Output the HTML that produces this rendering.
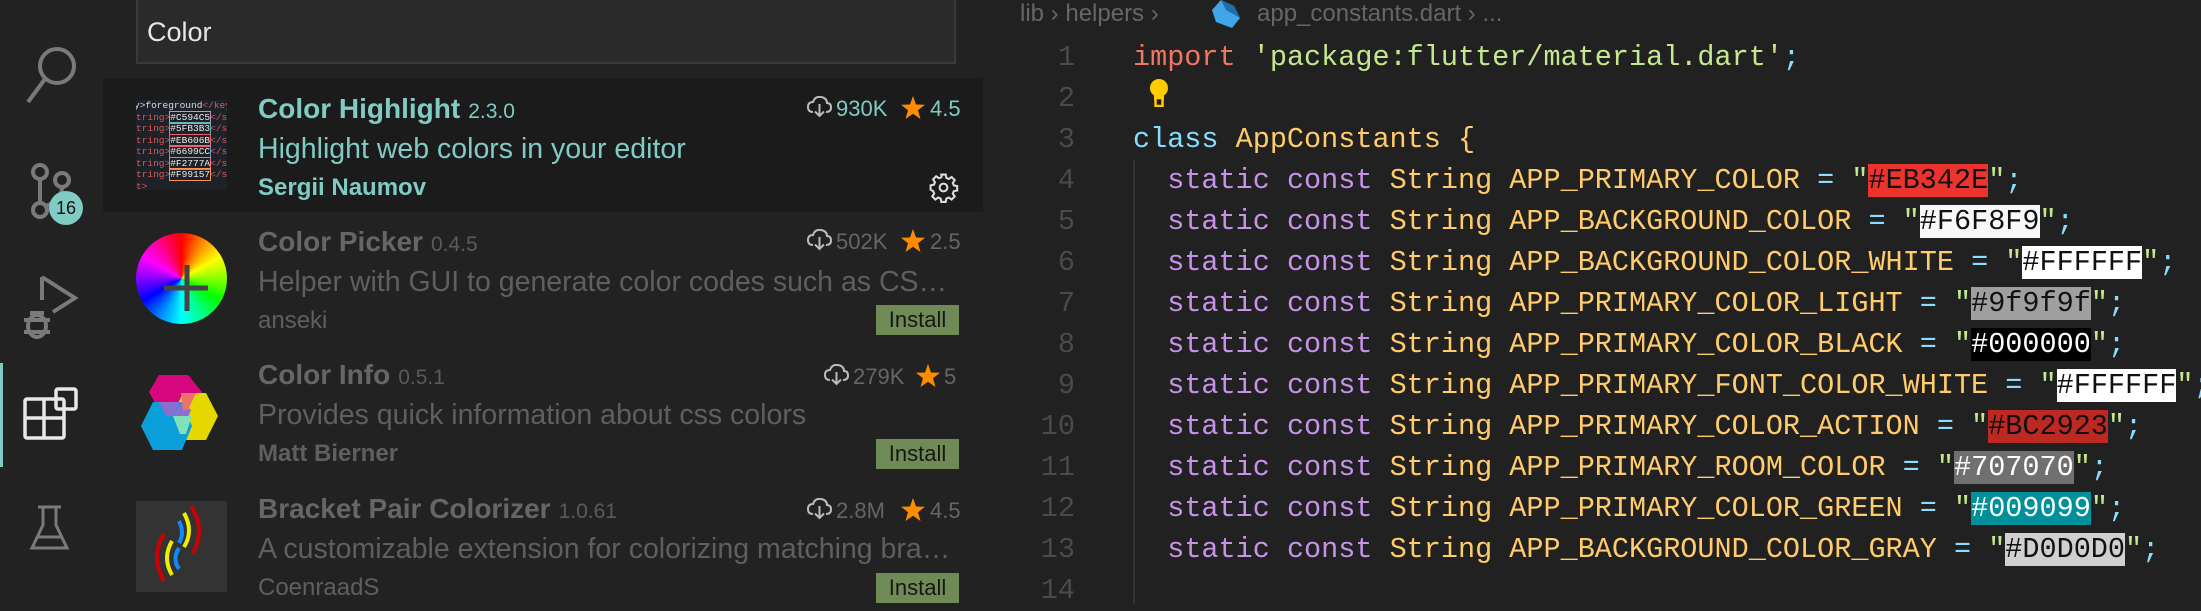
<!DOCTYPE html>
<html><head><meta charset="utf-8"><style>
*{margin:0;padding:0;box-sizing:border-box}
body{width:2201px;height:604px;background:#212121;position:relative;overflow:hidden;font-family:"Liberation Sans",sans-serif}
.a{position:absolute;white-space:nowrap}
.side{position:absolute;left:0;top:0;width:983px;height:604px;background:#222222}
.search{position:absolute;left:136px;top:-2px;width:820px;height:66px;background:#2a2a2a;border:2px solid #3a3a3a}
.sel{position:absolute;left:103px;top:78px;width:880px;height:134px;background:#1b1b1b}
.t{font-weight:bold;font-size:28px;color:#666}
.v{font-size:21px;color:#5a5a5a;font-weight:normal;margin-left:8px}
.d{font-size:28.5px;color:#5f5f5f}
.au{font-size:24px;color:#5f5f5f;font-weight:bold}
.st{font-size:22px;color:#666}
.btn{position:absolute;left:876px;width:83px;height:30px;background:#6f8a54;color:#161616;font-size:22px;text-align:center;line-height:30px}
.code{position:absolute;left:1133px;font-family:"Liberation Mono",monospace;font-size:28.5px;line-height:41px;white-space:pre}
.ln{position:absolute;left:1000px;width:75px;text-align:right;font-family:"Liberation Mono",monospace;font-size:28.5px;color:#4a4a4a;line-height:41px}
.k{color:#c792ea}.y{color:#ffcb6b}.c{color:#89ddff}.g{color:#c3e88d}.r{color:#f07660}
</style></head><body>
<div class="side"></div>
<svg class="a" style="left:0;top:0" width="103" height="604" fill="none" stroke="#7a7a7a" stroke-width="4">
<circle cx="57" cy="66" r="17"/><line x1="45" y1="79" x2="28" y2="102"/>
<circle cx="40" cy="172" r="7"/><circle cx="62" cy="180" r="7"/><circle cx="40" cy="210" r="7"/>
<line x1="40" y1="179" x2="40" y2="203"/><path d="M62 187 Q62 200 46 206"/>
<path d="M42 277 L75 298 L53 312"/><line x1="42" y1="277" x2="42" y2="300"/>
<ellipse cx="37" cy="326" rx="9" ry="11"/><line x1="24" y1="320" x2="50" y2="320"/><line x1="24" y1="332" x2="50" y2="332"/><line x1="30" y1="313" x2="44" y2="313"/>
<rect x="0" y="363" width="3" height="104" fill="#80cbc4" stroke="none"/>
<g stroke="#e8e8e8" stroke-width="3.5"><rect x="25" y="399" width="39" height="39" rx="2"/><line x1="44" y1="399" x2="44" y2="438"/><line x1="25" y1="418" x2="64" y2="418"/><rect x="56" y="389" width="20" height="20" rx="2"/></g>
<path d="M43 507 L43 525 L32 548 L67 548 L56 525 L56 507 M38 507 L61 507 M37 537 L62 537" stroke-width="3"/>
</svg>
<div class="a" style="left:49px;top:191px;width:34px;height:34px;border-radius:17px;background:#80cbc4;color:#111;font-size:18px;text-align:center;line-height:34px">16</div>
<div class="search"></div>
<div class="a" style="left:147px;top:17px;font-size:27px;color:#e6e6e6">Color</div>
<div class="sel"></div>
<div class="a" style="left:136px;top:100px;width:91px;height:90px;background:#1d2128;overflow:hidden;font-family:'Liberation Mono',monospace;font-size:9.5px;line-height:11.5px;color:#d65a5a">
<div style="margin-left:-2px"><span style="color:#ddd">y&gt;foreground</span>&lt;/key</div>
<div>tring&gt;<span style="color:#eee;outline:1px solid #c594c5">#C594C5</span>&lt;/str</div>
<div>tring&gt;<span style="color:#eee;outline:1px solid #5fb3b3">#5FB3B3</span>&lt;/str</div>
<div>tring&gt;<span style="color:#eee;outline:1px solid #eb606b">#EB606B</span>&lt;/str</div>
<div>tring&gt;<span style="color:#eee;outline:1px solid #6699cc">#6699CC</span>&lt;/str</div>
<div>tring&gt;<span style="color:#eee;outline:1px solid #f2777a">#F2777A</span>&lt;/str</div>
<div>tring&gt;<span style="color:#eee;outline:1px solid #f99157">#F99157</span>&lt;/str</div>
<div>t&gt;</div></div>
<div class="a t" style="left:258px;top:93px;color:#80cbc4">Color Highlight<span class="v" style="color:#80cbc4">2.3.0</span></div>
<div class="a d" style="left:258px;top:133px;color:#80cbc4">Highlight web colors in your editor</div>
<div class="a au" style="left:258px;top:174px;color:#80cbc4">Sergii Naumov</div>
<svg width="0" height="0" style="position:absolute"><defs>
<g id="cl"><path d="M6 16 Q1 16 1 11 Q1 6 6 6 Q8 0 14 1 Q20 2 20 7 Q24 7 24 11.5 Q24 16 19 16" fill="none" stroke="#bbb" stroke-width="2"/><path d="M12.5 8 V20 M8 15.5 L12.5 20 L17 15.5" fill="none" stroke="#bbb" stroke-width="2"/></g>
<path id="sr" d="M12 0 L15 8.5 L24 8.7 L17 14.2 L19.5 23 L12 17.8 L4.5 23 L7 14.2 L0 8.7 L9 8.5Z" fill="#ff8c00"/></defs></svg>
<svg class="a" style="left:807px;top:96px" width="26" height="22"><use href="#cl"/></svg>
<div class="a st" style="left:836px;top:96px;color:#80cbc4">930K</div>
<svg class="a" style="left:901px;top:96px" width="24" height="24"><use href="#sr"/></svg>
<div class="a st" style="left:930px;top:96px;color:#80cbc4">4.5</div>
<svg class="a" style="left:928px;top:172px" width="31" height="31" viewBox="0 0 24 24" fill="none" stroke="#ddd" stroke-width="1.6"><circle cx="12" cy="12" r="3"/><path d="M10.3 2h3.4l.5 2.6 1.9.8 2.2-1.5 2.4 2.4-1.5 2.2.8 1.9 2.6.5v3.4l-2.6.5-.8 1.9 1.5 2.2-2.4 2.4-2.2-1.5-1.9.8-.5 2.6h-3.4l-.5-2.6-1.9-.8-2.2 1.5-2.4-2.4 1.5-2.2-.8-1.9L2 13.7v-3.4l2.6-.5.8-1.9-1.5-2.2 2.4-2.4 2.2 1.5 1.9-.8z"/></svg>
<div class="a" style="left:136px;top:233px;width:91px;height:91px;border-radius:50%;background:conic-gradient(#f00,#f80,#ff0,#8f0,#0f0,#0f8,#0ff,#08f,#00f,#80f,#f0f,#f08,#f00)"></div>
<svg class="a" style="left:160px;top:263px" width="50" height="50"><path d="M27 2 V48 M4 25 H48" stroke="#444" stroke-width="5"/></svg>
<div class="a t" style="left:258px;top:226px">Color Picker<span class="v">0.4.5</span></div>
<div class="a d" style="left:258px;top:266px;width:698px;overflow:hidden;text-overflow:ellipsis">Helper with GUI to generate color codes such as CSS color notations.</div>
<div class="a au" style="left:258px;top:307px;font-weight:normal">anseki</div>
<svg class="a" style="left:807px;top:229px" width="26" height="22"><use href="#cl"/></svg>
<div class="a st" style="left:836px;top:229px">502K</div>
<svg class="a" style="left:901px;top:229px" width="24" height="24"><use href="#sr"/></svg>
<div class="a st" style="left:930px;top:229px">2.5</div>
<div class="btn" style="top:305px">Install</div>
<svg class="a" style="left:136px;top:370px" width="91" height="85">
<polygon points="23,5 52,5 66,22 52,40 23,40 13,22" fill="#d6067e"/>
<polygon points="47,23 70,23 82,46 70,70 47,70 36,46" fill="#e5d800"/>
<polygon points="17,32 46,32 56,56 46,80 17,80 5,56" fill="#0a9fd8"/>
<polygon points="46,32 55,40 48,56 36,46" fill="#8a6fd0"/>
<polygon points="23,32 44,32 36,46 30,46" fill="#8a6fd0"/>
<polygon points="45,23 60,23 52,40 47,40" fill="#f07070"/>
<polygon points="37,46 56,46 50,64 44,64" fill="#80e0b8"/>
</svg>
<div class="a t" style="left:258px;top:359px">Color Info<span class="v">0.5.1</span></div>
<div class="a d" style="left:258px;top:399px">Provides quick information about css colors</div>
<div class="a au" style="left:258px;top:440px">Matt Bierner</div>
<svg class="a" style="left:824px;top:364px" width="26" height="22"><use href="#cl"/></svg>
<div class="a st" style="left:853px;top:364px">279K</div>
<svg class="a" style="left:916px;top:364px" width="24" height="24"><use href="#sr"/></svg>
<div class="a st" style="left:944px;top:364px">5</div>
<div class="btn" style="top:439px">Install</div>
<div class="a" style="left:136px;top:501px;width:91px;height:91px;background:#333"></div>
<svg class="a" style="left:136px;top:501px" width="91" height="91" fill="none" stroke-width="4">
<path d="M28 33 Q14 55 28 80" stroke="#c00"/><path d="M36 40 Q26 57 36 74" stroke="#ee0"/><path d="M43 47 Q36 58 43 68" stroke="#18f"/>
<path d="M55 5 Q70 28 57 52" stroke="#c00"/><path d="M48 12 Q58 30 48 46" stroke="#ee0"/><path d="M43 20 Q49 32 43 42" stroke="#18f"/>
</svg>
<div class="a t" style="left:258px;top:493px">Bracket Pair Colorizer<span class="v">1.0.61</span></div>
<div class="a d" style="left:258px;top:533px;width:698px;overflow:hidden;text-overflow:ellipsis">A customizable extension for colorizing matching brackets</div>
<div class="a au" style="left:258px;top:574px;font-weight:normal">CoenraadS</div>
<svg class="a" style="left:807px;top:498px" width="26" height="22"><use href="#cl"/></svg>
<div class="a st" style="left:836px;top:498px">2.8M</div>
<svg class="a" style="left:901px;top:498px" width="24" height="24"><use href="#sr"/></svg>
<div class="a st" style="left:930px;top:498px">4.5</div>
<div class="btn" style="top:573px">Install</div>
<div class="a" style="left:1020px;top:0px;font-size:24px;color:#666">lib &#x203A; helpers &#x203A;</div>
<svg class="a" style="left:1212px;top:0" width="30" height="28"><polygon points="9,0 22,6 28,18 20,28 4,22 0,10" fill="#40a6e8"/><polygon points="9,0 22,6 28,18 14,10" fill="#1f6fb0"/></svg>
<div class="a" style="left:1257px;top:0px;font-size:24px;color:#666">app_constants.dart &#x203A; ...</div>
<div class="ln" style="top:37px">1<br>2<br>3<br>4<br>5<br>6<br>7<br>8<br>9<br>10<br>11<br>12<br>13<br>14</div>
<div class="a" style="left:1133px;top:160px;width:2px;height:444px;background:#333"></div>
<svg class="a" style="left:1149px;top:79px" width="20" height="28"><circle cx="10" cy="9" r="9" fill="#ffcc00"/><rect x="5" y="13" width="10" height="8" fill="#ffcc00"/><rect x="6.5" y="19" width="7" height="8" fill="#1e1e1e" stroke="#ffcc00" stroke-width="2.5"/></svg>
<div class="code" style="top:37px"><span class="r">import</span> <span class="g">'package:flutter/material.dart'</span><span class="c">;</span>

<span class="c">class</span> <span class="y">AppConstants {</span>
  <span class="k">static const</span> <span class="y">String APP_PRIMARY_COLOR</span> <span class="c">=</span> <span class="g">"</span><span style="background:#eb342e;color:#111">#EB342E</span><span class="g">"</span><span class="c">;</span>
  <span class="k">static const</span> <span class="y">String APP_BACKGROUND_COLOR</span> <span class="c">=</span> <span class="g">"</span><span style="background:#f6f8f9;color:#111">#F6F8F9</span><span class="g">"</span><span class="c">;</span>
  <span class="k">static const</span> <span class="y">String APP_BACKGROUND_COLOR_WHITE</span> <span class="c">=</span> <span class="g">"</span><span style="background:#fff;color:#111">#FFFFFF</span><span class="g">"</span><span class="c">;</span>
  <span class="k">static const</span> <span class="y">String APP_PRIMARY_COLOR_LIGHT</span> <span class="c">=</span> <span class="g">"</span><span style="background:#9f9f9f;color:#111">#9f9f9f</span><span class="g">"</span><span class="c">;</span>
  <span class="k">static const</span> <span class="y">String APP_PRIMARY_COLOR_BLACK</span> <span class="c">=</span> <span class="g">"</span><span style="background:#000;color:#fff">#000000</span><span class="g">"</span><span class="c">;</span>
  <span class="k">static const</span> <span class="y">String APP_PRIMARY_FONT_COLOR_WHITE</span> <span class="c">=</span> <span class="g">"</span><span style="background:#fff;color:#111">#FFFFFF</span><span class="g">"</span><span class="c">;</span>
  <span class="k">static const</span> <span class="y">String APP_PRIMARY_COLOR_ACTION</span> <span class="c">=</span> <span class="g">"</span><span style="background:#bc2923;color:#111">#BC2923</span><span class="g">"</span><span class="c">;</span>
  <span class="k">static const</span> <span class="y">String APP_PRIMARY_ROOM_COLOR</span> <span class="c">=</span> <span class="g">"</span><span style="background:#707070;color:#fff">#707070</span><span class="g">"</span><span class="c">;</span>
  <span class="k">static const</span> <span class="y">String APP_PRIMARY_COLOR_GREEN</span> <span class="c">=</span> <span class="g">"</span><span style="background:#009099;color:#fff">#009099</span><span class="g">"</span><span class="c">;</span>
  <span class="k">static const</span> <span class="y">String APP_BACKGROUND_COLOR_GRAY</span> <span class="c">=</span> <span class="g">"</span><span style="background:#d0d0d0;color:#111">#D0D0D0</span><span class="g">"</span><span class="c">;</span>
</div>
</body></html>
